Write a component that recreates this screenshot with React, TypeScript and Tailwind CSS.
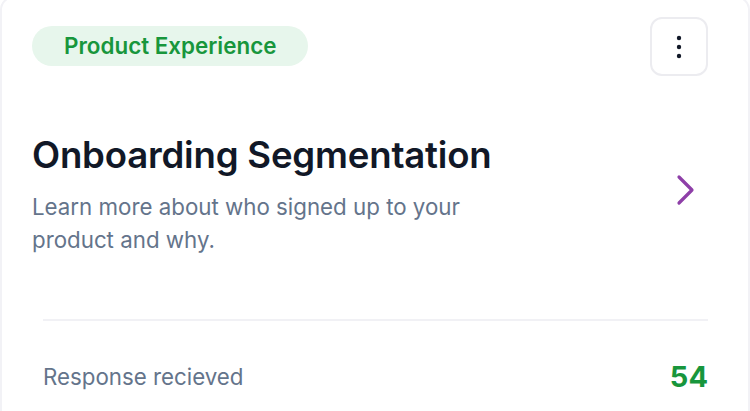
import React from 'react';

function DotsIcon() {
  return (
    <svg width="6" height="24" viewBox="0 0 6 24" fill="#111827">
      <circle cx="3" cy="3" r="2.2" />
      <circle cx="3" cy="12" r="2.2" />
      <circle cx="3" cy="21" r="2.2" />
    </svg>
  );
}

function ChevronRight() {
  return (
    <svg width="22" height="32" viewBox="0 0 22 32" fill="none">
      <path
        d="M4 3 L17 16 L4 29"
        stroke="#8e3fa8"
        strokeWidth="3.2"
        strokeLinecap="round"
        strokeLinejoin="round"
      />
    </svg>
  );
}

export default function App() {
  return (
    <div
      className="h-[411px] w-[750px] overflow-hidden bg-white"
      style={{ fontFamily: 'Inter, "Noto Sans", sans-serif' }}
    >
      <div className="-mt-[4px] h-[430px] rounded-[14px] border-2 border-[#f2f2f6] bg-white pl-[30px] pr-[40px] pt-[19px]">
        <div className="flex items-start justify-between">
          <span className="mt-[9px] inline-flex h-[40px] items-center rounded-full bg-[#e7f6ec] px-[32px] text-[22.4px] font-semibold text-[#18963c]">
            Product Experience
          </span>
          <button className="flex h-[59px] w-[58px] items-center justify-center rounded-[12px] border-2 border-[#ececf0] bg-white">
            <DotsIcon />
          </button>
        </div>

        <div className="mt-[57px] flex items-center justify-between">
          <div>
            <h1 className="text-[36.6px] leading-[44px] font-semibold tracking-[-0.2px] text-[#111827]">
              Onboarding Segmentation
            </h1>
            <p className="mt-[13px] w-[450px] text-[22.3px] leading-[33px] text-[#64748b]">
              Learn more about who signed up to your product and why.
            </p>
          </div>
          <div className="mr-[11px] mt-[-10px]">
            <ChevronRight />
          </div>
        </div>

        <div className="ml-[11px] mt-[63px] h-[2px] bg-[#f1f1f5]" />

        <div className="ml-[11px] mt-[40px] flex items-center justify-between">
          <span className="text-[22.3px] leading-[28px] text-[#64748b]">Response recieved</span>
          <span className="text-[29px] leading-[32px] font-bold text-[#18963c]">54</span>
        </div>
      </div>
    </div>
  );
}
